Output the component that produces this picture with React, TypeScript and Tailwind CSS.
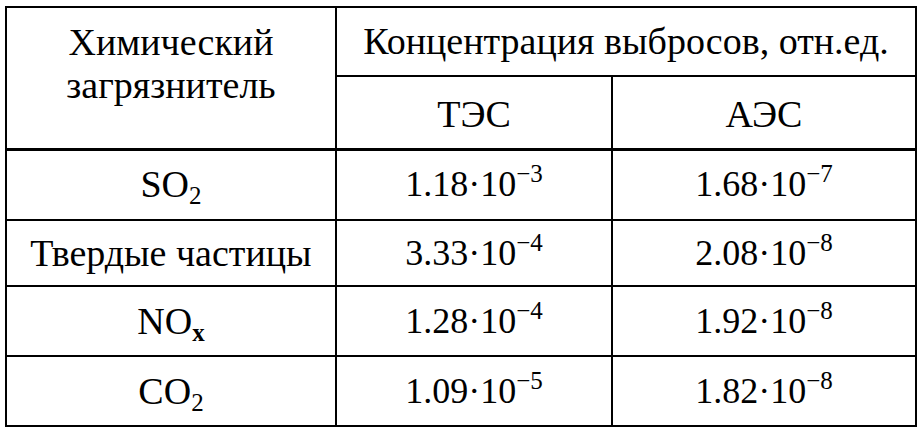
import React from "react";

function Val({ m, e }: { m: string; e: string }) {
  return (
    <span>
      {m}·10<span className="text-[25px] relative top-[-14px] leading-none">−{e}</span>
    </span>
  );
}

export default function App() {
  const rows: { name: React.ReactNode; a: [string, string]; b: [string, string]; h: string }[] = [
    { name: <span>SO<span className="text-[25px] relative top-[7px] leading-none">2</span></span>, a: ["1.18", "3"], b: ["1.68", "7"], h: "h-[71px]" },
    { name: "Твердые частицы", a: ["3.33", "4"], b: ["2.08", "8"], h: "h-[66px]" },
    { name: <span>NO<span className="text-[25px] relative top-[7px] leading-none font-bold">x</span></span>, a: ["1.28", "4"], b: ["1.92", "8"], h: "h-[70px]" },
    { name: <span>CO<span className="text-[25px] relative top-[7px] leading-none">2</span></span>, a: ["1.09", "5"], b: ["1.82", "8"], h: "h-[70px]" },
  ];
  return (
    <div className="w-[920px] h-[442px] bg-white text-black overflow-hidden font-['Liberation_Serif','Times_New_Roman',serif]">
      <table className="ml-[5px] mt-[6px] w-[910px] table-fixed border-collapse text-[38px] leading-[43px]">
        <colgroup>
          <col className="w-[330px]" />
          <col className="w-[276px]" />
          <col className="w-[304px]" />
        </colgroup>
        <tbody>
          <tr className="h-[69px]">
            <td rowSpan={2} className="border-2 border-black border-b-[3px] text-center align-top pt-[13px]">
              Химический<br />загрязнитель
            </td>
            <td colSpan={2} className="border-2 border-black text-center">
              Концентрация выбросов, отн.ед.
            </td>
          </tr>
          <tr className="h-[73px]">
            <td className="border-2 border-black border-b-[3px] text-center pt-[4px]">ТЭС</td>
            <td className="border-2 border-black border-b-[3px] text-center pt-[4px]">АЭС</td>
          </tr>
          {rows.map((r, i) => (
            <tr key={i} className={r.h}>
              <td className="border-2 border-black text-center">{r.name}</td>
              <td className="border-2 border-black text-center text-[36px]">
                <Val m={r.a[0]} e={r.a[1]} />
              </td>
              <td className="border-2 border-black text-center text-[36px]">
                <Val m={r.b[0]} e={r.b[1]} />
              </td>
            </tr>
          ))}
        </tbody>
      </table>
    </div>
  );
}
